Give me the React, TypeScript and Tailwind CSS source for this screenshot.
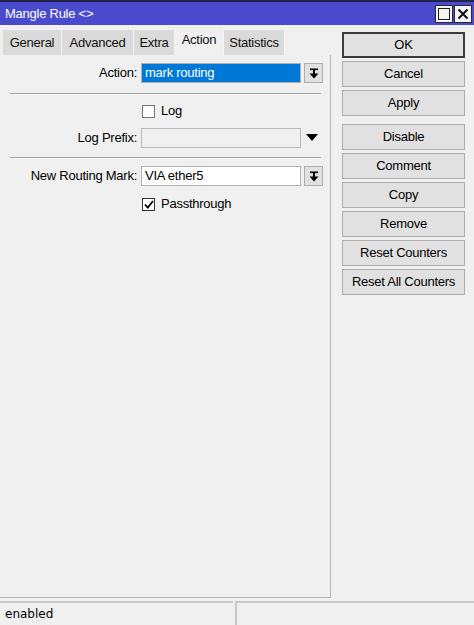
import React from "react";

const font = { fontFamily: '"Liberation Sans", Arial, sans-serif' };

function DropIcon() {
  return (
    <svg width="10" height="11" viewBox="0 0 10 11">
      <rect x="1" y="0.5" width="8" height="1.6" fill="#000" />
      <rect x="4" y="2" width="2" height="4" fill="#000" />
      <polygon points="0.5,5.5 9.5,5.5 5,10.5" fill="#000" />
    </svg>
  );
}

function DropBtn() {
  return (
    <div className="w-[19px] h-[20px] border border-[#adadad] bg-[#e1e1e1] flex items-center justify-center">
      <DropIcon />
    </div>
  );
}

function Sep() {
  return (
    <div className="ml-[10px] w-[311px] h-[2px] border-t border-[#a0a0a0] border-b border-b-white" />
  );
}

function Btn({ label, def }: { label: string; def?: boolean }) {
  return (
    <div
      className={
        "w-[123px] h-[26px] flex items-center justify-center text-[13px] text-black bg-[#e1e1e1] " +
        (def ? "border-2 border-[#3c3c3c]" : "border border-[#adadad]")
      }
    >
      {label}
    </div>
  );
}

export default function App() {
  const tabs: [string, string][] = [
    ["General", "w-[59px]"],
    ["Advanced", "w-[72px]"],
    ["Extra", "w-[41px]"],
    ["Action", "w-[49px]"],
    ["Statistics", "w-[61px]"],
  ];
  return (
    <div
      className="w-[474px] h-[625px] bg-[#f0f0f0] flex flex-col overflow-hidden tracking-[-0.25px]"
      style={font}
    >
      <div className="h-[2px] bg-[#22224a]" />
      <div className="h-[23px] bg-[#4a4acf] flex items-center justify-between pl-[5px] pr-[2px]">
        <span className="text-white text-[13px]">Mangle Rule &lt;&gt;</span>
        <div className="flex gap-[1px]">
          <div className="w-[18px] h-[18px] bg-[#f4f4f4] border border-[#2a2a2a] flex items-center justify-center">
            <div className="w-[12px] h-[12px] border-[1.5px] border-[#222]" />
          </div>
          <div className="w-[18px] h-[18px] bg-[#f4f4f4] border border-[#2a2a2a] flex items-center justify-center">
            <svg width="12" height="12" viewBox="0 0 12 12">
              <path d="M1.5 1.5 L10.5 10.5 M10.5 1.5 L1.5 10.5" stroke="#111" strokeWidth="2" />
            </svg>
          </div>
        </div>
      </div>
      <div className="flex-1 flex">
        <div className="w-[331px] flex flex-col">
          <div className="h-[30px] flex items-end pl-[3px]">
            {tabs.map(([t, w]) => (
              <div
                key={t}
                className={
                  "text-[13px] flex items-center justify-center text-[#111] border-r border-[#f4f4f4] " +
                  w +
                  " " +
                  (t === "Action" ? "h-[28px] bg-[#f0f0f0] pb-[2px]" : "h-[25px] bg-[#dadada]")
                }
              >
                {t}
              </div>
            ))}
          </div>
          <div className="flex-1 border-r border-b border-[#b4b4b4] mb-[3px] pt-[8px] text-[13px] text-black">
            <div className="flex items-center h-[20px]">
              <div className="w-[137px] text-right">Action:</div>
              <div className="ml-[4px] w-[160px] h-[20px] bg-[#0078d7] border border-[#b0b0b0] text-white flex items-center pl-[3px]">
                mark routing
              </div>
              <div className="ml-[3px]">
                <DropBtn />
              </div>
            </div>
            <div className="mt-[10px]">
              <Sep />
            </div>
            <div className="mt-[9px] flex items-center h-[14px] pl-[142px]">
              <div className="w-[13px] h-[13px] border border-[#777] bg-white" />
              <span className="ml-[6px]">Log</span>
            </div>
            <div className="mt-[10px] flex items-center h-[20px]">
              <div className="w-[137px] text-right">Log Prefix:</div>
              <div className="ml-[4px] w-[160px] h-[20px] bg-[#f0f0f0] border border-[#b8b8b8]" />
              <div className="ml-[5px] w-[12px] flex justify-center">
                <svg width="12" height="8" viewBox="0 0 12 8">
                  <polygon points="0,0 12,0 6,7" fill="#000" />
                </svg>
              </div>
            </div>
            <div className="mt-[9px]">
              <Sep />
            </div>
            <div className="mt-[7px] flex items-center h-[20px]">
              <div className="w-[137px] text-right">New Routing Mark:</div>
              <div className="ml-[4px] w-[160px] h-[20px] bg-white border border-[#b0b0b0] flex items-center pl-[3px]">
                VIA ether5
              </div>
              <div className="ml-[3px]">
                <DropBtn />
              </div>
            </div>
            <div className="mt-[11px] flex items-center h-[14px] pl-[142px]">
              <div className="w-[13px] h-[13px] border border-[#333] bg-white flex items-center justify-center">
                <svg width="10" height="9" viewBox="0 0 10 9">
                  <path d="M1 4.5 L3.8 7.5 L9 1" stroke="#000" strokeWidth="1.8" fill="none" />
                </svg>
              </div>
              <span className="ml-[6px]">Passthrough</span>
            </div>
          </div>
        </div>
        <div className="flex flex-col pl-[11px] pt-[7px]">
          <div className="flex flex-col gap-[3px]">
            <Btn label="OK" def />
            <Btn label="Cancel" />
            <Btn label="Apply" />
          </div>
          <div className="flex flex-col gap-[3px] mt-[8px]">
            <Btn label="Disable" />
            <Btn label="Comment" />
            <Btn label="Copy" />
            <Btn label="Remove" />
            <Btn label="Reset Counters" />
            <Btn label="Reset All Counters" />
          </div>
        </div>
      </div>
      <div
        className="h-[24px] flex text-[12px] text-black tracking-normal"
        style={{ fontFamily: '"DejaVu Sans", Verdana, sans-serif' }}
      >
        <div className="w-[233px] border-t-2 border-[#c8c8c8] pl-[5px] flex items-center">enabled</div>
        <div className="ml-[2px] flex-1 border-t-2 border-l-2 border-[#c8c8c8]" />
      </div>
    </div>
  );
}
